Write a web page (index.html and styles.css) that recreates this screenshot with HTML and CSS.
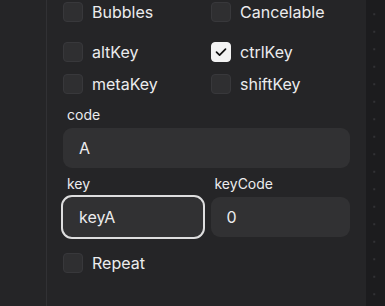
FILE: index.html
```html
<!DOCTYPE html>
<html lang="en">
<head>
  <meta charset="UTF-8" />
  <meta name="viewport" content="width=device-width, initial-scale=1.0"/>
  <title>Keyboard Event</title>
  <link rel="stylesheet" href="styles.css">
</head>
<body>

  <div class="layout">
    <div class="sidebar"></div>

    <div class="panel">
      <div class="row first">
        <label class="check"><span class="box"></span>Bubbles</label>
        <label class="check"><span class="box"></span>Cancelable</label>
      </div>

      <div class="row group">
        <label class="check"><span class="box"></span>altKey</label>
        <label class="check"><span class="box checked">
          <svg width="14" height="14" viewBox="0 0 14 14"><path d="M2.5 7.2 L5.6 10.2 L11.5 4.2" fill="none" stroke="#111" stroke-width="1.7" stroke-linecap="round" stroke-linejoin="round"/></svg>
        </span>ctrlKey</label>
      </div>
      <div class="row">
        <label class="check"><span class="box"></span>metaKey</label>
        <label class="check"><span class="box"></span>shiftKey</label>
      </div>

      <div class="field code-field">
        <div class="label">code</div>
        <div class="input">A</div>
      </div>

      <div class="pair">
        <div class="field">
          <div class="label">key</div>
          <div class="input focused">keyA</div>
        </div>
        <div class="field">
          <div class="label">keyCode</div>
          <div class="input">0</div>
        </div>
      </div>

      <div class="row repeat">
        <label class="check"><span class="box"></span>Repeat</label>
      </div>
    </div>

    <div class="rail"></div>
  </div>

</body>
</html>
```

FILE: styles.css
```css
body {
  margin: 0;
  background: #252527;
  font-family: 'Inter', sans-serif;
  color: #ececee;
}
.layout {
  display: flex;
  height: 306px;
  overflow: hidden;
}
.sidebar {
  width: 46px;
  border-right: 1px solid #313134;
}
.panel {
  flex: 1;
  padding: 2px 16px 0 16px;
}
.rail {
  width: 19px;
  background-color: #1c1c1e;
  background-image: radial-gradient(circle, #323235 0.8px, transparent 1.2px);
  background-size: 17.5px 17.5px;
  background-position: -0.5px 5.5px;
}
.row {
  display: grid;
  grid-template-columns: 148px 1fr;
  height: 20px;
  margin-top: 12px;
}
.row.first {
  margin-top: 0;
}
.row.group {
  margin-top: 20px;
}
.check {
  display: flex;
  align-items: center;
  gap: 9px;
  font-size: 16px;
}
.box {
  width: 18px;
  height: 18px;
  border: 1px solid #38383b;
  border-radius: 4px;
  background: #2f2f31;
  display: flex;
  align-items: center;
  justify-content: center;
}
.box.checked {
  background: #f3f3f3;
  border-color: #f3f3f3;
}
.label {
  font-size: 14px;
  line-height: 18px;
  padding-left: 4px;
  margin-bottom: 4px;
}
.code-field {
  margin-top: 12px;
}
.pair {
  display: grid;
  grid-template-columns: 1fr 1fr;
  gap: 8px;
  margin-top: 7px;
}
.pair .label {
  margin-bottom: 4px;
}
.input {
  height: 40px;
  border-radius: 9px;
  background: #313133;
  font-size: 16px;
  display: flex;
  align-items: center;
  padding-left: 16px;
}
.input.focused {
  outline: 2px solid #dededf;
}
.row.repeat {
  margin-top: 16px;
}
```
